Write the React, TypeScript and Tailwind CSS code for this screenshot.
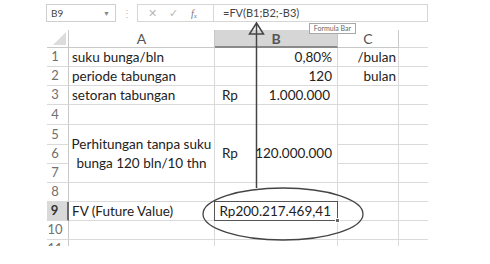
import React from 'react';

const GRID = 'border-[#dadada]';

type CellProps = {
  children?: React.ReactNode;
  className?: string;
};

function Cell({ children, className = '' }: CellProps) {
  return <div className={`flex items-center border-r border-b ${GRID} overflow-visible whitespace-nowrap ${className}`}>{children}</div>;
}

function RowNum({ n, active = false }: { n: number; active?: boolean }) {
  return (
    <div
      className={`flex items-center justify-center pr-[5px] border-b border-[#dadada] text-[13px] ${
        active ? 'bg-[#d9d9d9] border-r-2 border-r-[#6b6b6b] font-bold text-[#333]' : 'border-r border-r-[#c8c8c8] text-[#6f6f6f]'
      }`}
    >
      {n}
    </div>
  );
}

export default function App() {
  return (
    <div className="relative w-[490px] h-[264px] bg-white overflow-hidden text-[#222]" style={{ fontFamily: 'Lato, "Open Sans", sans-serif' }}>
      {/* formula bar */}
      <div className="flex items-center pt-[4px] pl-[46px] h-[22px]">
        <div className="flex items-center justify-between w-[70px] h-[18px] border border-[#cfcfcf] pl-[4px] pr-[5px] text-[10px] text-[#444]">
          <span>B9</span>
          <span className="text-[7px] text-[#888]">▼</span>
        </div>
        <div className="w-[21px] flex justify-center text-[10px] text-[#bdbdbd]">⋮</div>
        <div className="flex h-[18px] w-[291px] border border-[#d6d6d6]">
          <div className="flex items-center w-[76px] border-r border-[#d6d6d6] text-[#b8b8b8] text-[11px]">
            <span className="ml-[10px]">✕</span>
            <span className="ml-[12px]">✓</span>
            <span className="ml-[13px] italic text-[#777] text-[10px]" style={{ fontFamily: '"Liberation Serif", serif' }}>f<sub className="text-[7px]">x</sub></span>
          </div>
          <div className="flex items-center pl-[9px] text-[11px] text-[#444]">=FV(B1;B2;-B3)</div>
        </div>
      </div>

      {/* sheet */}
      <div className="mt-[8px] ml-[47px] h-[216px] overflow-hidden">
        <div className="grid grid-cols-[22px_146px_123px_61px_29px] grid-rows-[18px_19px_19px_19px_20px_20px_19px_19px_19px_19px_19px_19px] text-[13.5px]">
          {/* header */}
          <div className="relative border-r border-b border-[#c8c8c8]">
            <svg className="absolute right-[2px] bottom-[2px]" width="13" height="13" viewBox="0 0 13 13">
              <polygon points="13,0 13,13 0,13" fill="#dcdcdc" />
            </svg>
          </div>
          <div className="flex items-center justify-center border-r border-b border-[#c8c8c8] text-[14px] text-[#555]">A</div>
          <div className="flex items-center justify-center bg-[#d6d6d6] border-r border-r-[#c8c8c8] border-b-2 border-b-[#8a8a8a] text-[14px] font-bold text-[#555]">B</div>
          <div className="flex items-center justify-center border-r border-b border-[#c8c8c8] text-[14px] text-[#555]">C</div>
          <div className="border-b border-[#dadada]" />

          {/* row 1 */}
          <RowNum n={1} />
          <Cell className="pl-[3px]">suku bunga/bln</Cell>
          <Cell className="justify-end pr-[5px]">0,80%</Cell>
          <Cell className="justify-end pr-[2px]">/bulan</Cell>
          <div className="border-b border-[#dadada]" />

          {/* row 2 */}
          <RowNum n={2} />
          <Cell className="pl-[3px]">periode tabungan</Cell>
          <Cell className="justify-end pr-[5px]">120</Cell>
          <Cell className="justify-end pr-[2px]">bulan</Cell>
          <div className="border-b border-[#dadada]" />

          {/* row 3 */}
          <RowNum n={3} />
          <Cell className="pl-[3px]">setoran tabungan</Cell>
          <Cell className="justify-between pl-[7px] pr-[7px]">
            <span>Rp</span>
            <span>1.000.000</span>
          </Cell>
          <Cell />
          <div className="border-b border-[#dadada]" />

          {/* row 4 */}
          <RowNum n={4} />
          <Cell />
          <Cell />
          <Cell />
          <div className="border-b border-[#dadada]" />

          {/* rows 5-7 */}
          <RowNum n={5} />
          <Cell className="row-span-3 justify-center text-center leading-[19px] whitespace-normal">
            <span>
              Perhitungan tanpa suku
              <br />
              bunga 120 bln/10 thn
            </span>
          </Cell>
          <Cell className="row-span-3 justify-between pl-[7px] pr-[5px]">
            <span>Rp</span>
            <span>120.000.000</span>
          </Cell>
          <Cell />
          <div className="border-b border-[#dadada]" />
          <RowNum n={6} />
          <Cell />
          <div className="border-b border-[#dadada]" />
          <RowNum n={7} />
          <Cell />
          <div className="border-b border-[#dadada]" />

          {/* row 8 */}
          <RowNum n={8} />
          <Cell />
          <Cell />
          <Cell />
          <div className="border-b border-[#dadada]" />

          {/* row 9 */}
          <RowNum n={9} active />
          <Cell className="pl-[3px]">FV (Future Value)</Cell>
          <div className="relative flex items-center justify-end pr-[6px] border border-[#555] -mt-px -ml-px">
            Rp200.217.469,41
            <span className="absolute -right-[3px] -bottom-[3px] w-[5px] h-[5px] bg-[#666] border border-white" />
          </div>
          <Cell />
          <div className="border-b border-[#dadada]" />

          {/* row 10 */}
          <RowNum n={10} />
          <Cell />
          <Cell />
          <Cell />
          <div className="border-b border-[#dadada]" />

          {/* row 11 */}
          <RowNum n={11} />
          <Cell />
          <Cell />
          <Cell />
          <div className="border-b border-[#dadada]" />
        </div>
      </div>

      {/* annotation: arrow + ellipse */}
      <svg className="absolute left-0 top-0 pointer-events-none" width="490" height="264" viewBox="0 0 490 264">
        <line x1="256.5" y1="24" x2="256.5" y2="188" stroke="#444" strokeWidth="1.5" />
        <polygon points="256.5,23 249.5,34 263.5,34" fill="none" stroke="#444" strokeWidth="1.5" />
        <ellipse cx="283" cy="214" rx="80" ry="26" fill="none" stroke="#444" strokeWidth="1.3" />
      </svg>

      {/* tooltip */}
      <div className="absolute left-[309px] top-[23px] w-[47px] h-[11px] flex items-center justify-center bg-white border border-[#a8a8a8] text-[7px] text-[#666] leading-none">
        Formula Bar
      </div>
    </div>
  );
}
